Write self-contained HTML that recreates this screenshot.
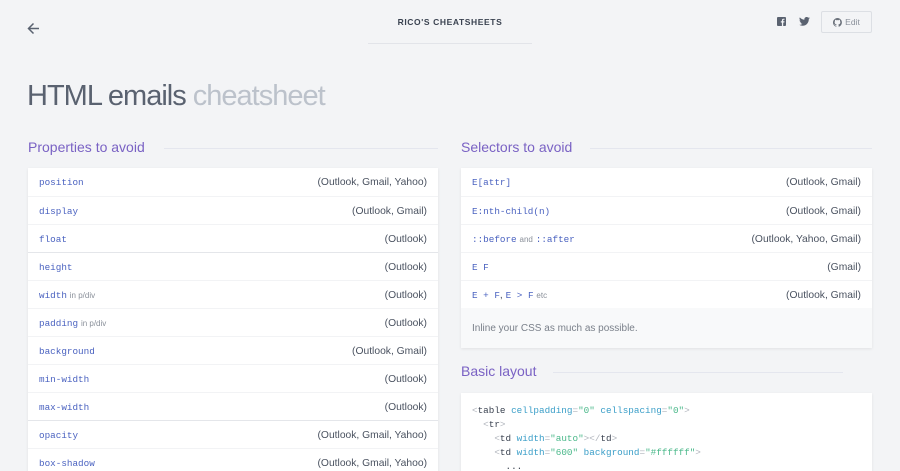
<!DOCTYPE html>
<html><head><meta charset="utf-8"><style>
*{box-sizing:border-box;margin:0;padding:0}
html{height:471px;overflow:hidden}
body{width:900px;height:471px;overflow:hidden;background:#f3f4f6;font-family:"Liberation Sans",sans-serif;position:relative;color:#556}
.abs{position:absolute}
.brand{left:0;width:900px;top:17px;text-align:center;font-size:8.5px;font-weight:bold;letter-spacing:.6px;color:#3a4250}
.bline{left:368px;width:164px;top:43px;height:1px;background:#e2e4e9}
h1{position:absolute;left:27px;top:80px;font-size:29px;font-weight:normal;color:#5a6270;letter-spacing:-1px}
h1 span{color:#bcc2cb}
h2{position:absolute;font-size:14px;font-weight:normal;color:#7a62c4}
.hl{position:absolute;height:1px;background:#e4e6ee}
.card{position:absolute;background:#fff;box-shadow:0 1px 3px rgba(0,0,0,.08)}
.row{height:28px;display:flex;align-items:center;justify-content:space-between;padding:1px 11px 0;border-top:1px solid #f2f3f5;font-size:10.3px;color:#4a5260}
.row:first-child{border-top:none}
.row.g{border-top:1px solid #e4e6ea}
code{font-family:"Liberation Mono",monospace;color:#4a62c0;font-size:9.3px}
small{font-size:8px;color:#8a909a}
.note{background:#f8f9fa;height:40px;padding:0 11px;display:flex;align-items:center;font-size:10px;color:#7a808a}
pre{font-family:"Liberation Mono",monospace;font-size:9.3px;line-height:14px;color:#b0b4bc;padding:11px 11px}
.t{color:#3a4250}.a{color:#3a9ec8}.v{color:#4ab88a}
</style></head><body>
<svg class="abs" style="left:27px;top:22px" width="14" height="13" viewBox="0 0 14 13"><path d="M12 6.5H2M6.5 1.5L1.5 6.5 6.5 11.5" fill="none" stroke="#5a6270" stroke-width="1.5"/></svg>
<div class="abs brand">RICO'S CHEATSHEETS</div>
<div class="abs bline"></div>
<svg class="abs" style="left:777px;top:17px" width="9" height="9" viewBox="0 0 9 9"><rect width="9" height="9" rx="1" fill="#5a6270"/><path d="M6.2 9V5.5h1.1l.2-1.3H6.2v-.8c0-.4.1-.6.6-.6h.7V1.7H6.5c-1 0-1.6.6-1.6 1.6v.9H3.8v1.3h1.1V9z" fill="#f3f4f6"/></svg>
<svg class="abs" style="left:799px;top:17px" width="11" height="9" viewBox="0 0 24 20"><path d="M24 2.4a10 10 0 0 1-2.8.8A5 5 0 0 0 23.3.4a10 10 0 0 1-3.1 1.2A4.9 4.9 0 0 0 11.8 6 14 14 0 0 1 1.7.9a4.9 4.9 0 0 0 1.5 6.6A4.9 4.9 0 0 1 1 6.9a4.9 4.9 0 0 0 3.9 4.8 4.9 4.9 0 0 1-2.2.1 4.9 4.9 0 0 0 4.6 3.4A9.9 9.9 0 0 1 0 17.3 14 14 0 0 0 7.5 19.5c9.1 0 14-7.5 14-14v-.6A10 10 0 0 0 24 2.4z" fill="#5a6270"/></svg>
<div class="abs" style="left:821px;top:11px;width:51px;height:22px;border:1px solid #dcdfe4;border-radius:2px;font-size:8.5px;color:#8a909a;display:flex;align-items:center;justify-content:center;gap:3px"><svg width="9" height="9" viewBox="0 0 16 16"><path d="M8 0a8 8 0 0 0-2.5 15.6c.4 0 .5-.2.5-.4v-1.5c-2.2.5-2.7-1-2.7-1-.4-.9-.9-1.2-.9-1.200-.7-.5.1-.5.1-.5.8.1 1.2.8 1.2.8.7 1.3 1.9.9 2.3.7.1-.5.3-.9.5-1.1-1.8-.2-3.6-.9-3.6-4 0-.9.3-1.6.8-2.1-.1-.2-.4-1 .1-2.1 0 0 .7-.2 2.2.8a7.5 7.5 0 0 1 4 0c1.5-1 2.2-.8 2.2-.8.4 1.1.2 1.9.1 2.1.5.6.8 1.3.8 2.100 0 3.1-1.9 3.8-3.6 4 .3.3.5.8.5 1.5v2.2c0 .2.1.5.6.4A8 8 0 0 0 8 0z" fill="#6a707a"/></svg>Edit</div>

<h1>HTML emails <span>cheatsheet</span></h1>

<h2 style="left:28px;top:139px">Properties to avoid</h2>
<div class="hl" style="left:164px;top:148px;width:274px"></div>
<h2 style="left:461px;top:139px">Selectors to avoid</h2>
<div class="hl" style="left:590px;top:148px;width:282px"></div>

<div class="card" style="left:28px;top:168px;width:410px;height:320px">
<div class="row"><code>position</code><span>(Outlook, Gmail, Yahoo)</span></div>
<div class="row"><code>display</code><span>(Outlook, Gmail)</span></div>
<div class="row"><code>float</code><span>(Outlook)</span></div>
<div class="row g"><code>height</code><span>(Outlook)</span></div>
<div class="row"><span><code>width</code> <small>in p/div</small></span><span>(Outlook)</span></div>
<div class="row"><span><code>padding</code> <small>in p/div</small></span><span>(Outlook)</span></div>
<div class="row"><code>background</code><span>(Outlook, Gmail)</span></div>
<div class="row"><code>min-width</code><span>(Outlook)</span></div>
<div class="row"><code>max-width</code><span>(Outlook)</span></div>
<div class="row g"><code>opacity</code><span>(Outlook, Gmail, Yahoo)</span></div>
<div class="row"><code>box-shadow</code><span>(Outlook, Gmail, Yahoo)</span></div>
</div>

<div class="card" style="left:461px;top:168px;width:411px">
<div class="row"><code>E[attr]</code><span>(Outlook, Gmail)</span></div>
<div class="row"><code>E:nth-child(n)</code><span>(Outlook, Gmail)</span></div>
<div class="row"><span><code>::before</code> <small>and</small> <code>::after</code></span><span>(Outlook, Yahoo, Gmail)</span></div>
<div class="row"><code>E F</code><span>(Gmail)</span></div>
<div class="row"><span><code>E + F</code>, <code>E &gt; F</code> <small>etc</small></span><span>(Outlook, Gmail)</span></div>
<div class="note">Inline your CSS as much as possible.</div>
</div>

<h2 style="left:461px;top:363px">Basic layout</h2>
<div class="hl" style="left:553px;top:372px;width:290px"></div>
<div class="card" style="left:461px;top:393px;width:411px;height:100px">
<pre>&lt;<span class="t">table</span> <span class="a">cellpadding</span>=<span class="v">"0"</span> <span class="a">cellspacing</span>=<span class="v">"0"</span>&gt;
  &lt;<span class="t">tr</span>&gt;
    &lt;<span class="t">td</span> <span class="a">width</span>=<span class="v">"auto"</span>&gt;&lt;/<span class="t">td</span>&gt;
    &lt;<span class="t">td</span> <span class="a">width</span>=<span class="v">"600"</span> <span class="a">background</span>=<span class="v">"#ffffff"</span>&gt;
      <span class="t">...</span></pre>
</div>
</body></html>
